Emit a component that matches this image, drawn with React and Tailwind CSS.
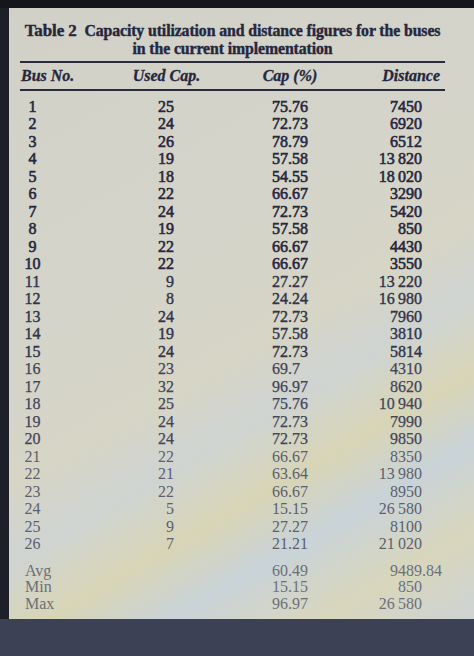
import React from "react";

const rows = [
  ["1", "25", "75", ".76", "7450"],
  ["2", "24", "72", ".73", "6920"],
  ["3", "26", "78", ".79", "6512"],
  ["4", "19", "57", ".58", "13\u2009820"],
  ["5", "18", "54", ".55", "18\u2009020"],
  ["6", "22", "66", ".67", "3290"],
  ["7", "24", "72", ".73", "5420"],
  ["8", "19", "57", ".58", "850"],
  ["9", "22", "66", ".67", "4430"],
  ["10", "22", "66", ".67", "3550"],
  ["11", "9", "27", ".27", "13\u2009220"],
  ["12", "8", "24", ".24", "16\u2009980"],
  ["13", "24", "72", ".73", "7960"],
  ["14", "19", "57", ".58", "3810"],
  ["15", "24", "72", ".73", "5814"],
  ["16", "23", "69", ".7", "4310"],
  ["17", "32", "96", ".97", "8620"],
  ["18", "25", "75", ".76", "10\u2009940"],
  ["19", "24", "72", ".73", "7990"],
  ["20", "24", "72", ".73", "9850"],
  ["21", "22", "66", ".67", "8350"],
  ["22", "21", "63", ".64", "13\u2009980"],
  ["23", "22", "66", ".67", "8950"],
  ["24", "5", "15", ".15", "26\u2009580"],
  ["25", "9", "27", ".27", "8100"],
  ["26", "7", "21", ".21", "21\u2009020"],
];

const summary = [
  ["Avg", "60", ".49", "9489", ".84"],
  ["Min", "15", ".15", "850", ""],
  ["Max", "96", ".97", "26\u2009580", ""],
];

function rowClass(i) {
  if (i < 10) return "text-[#26283f] [-webkit-text-stroke:0.6px_#26283f]";
  if (i < 15) return "text-[#323449] [-webkit-text-stroke:0.4px_#323449]";
  if (i < 20) return "text-[#42455a] [-webkit-text-stroke:0.25px_#42455a]";
  return "text-[#5c5f6e]";
}

export default function App() {
  return (
    <div className="w-[474px] h-[656px] overflow-hidden bg-[#1b1c22] flex flex-col">
      <div className="h-[8px] bg-[#15161b]" />
      <div className="flex">
        <div className="w-[9px] bg-[#1e2029]" />
        <div
          className="flex-1 h-[611px] bg-[linear-gradient(150deg,#d1d1c8_0%,#d4d4ca_40%,#d6d5c6_55%,#cfd4d2_63%,#d8d5b6_72%,#c9d3d8_80%,#d8d6bc_90%,#cdd3d4_100%)]"
          style={{ fontFamily: '"Liberation Serif", "Times New Roman", serif' }}
        >
          <div className="ml-[11px] w-[425px]">
            <div className="mt-[14px] text-center font-bold text-[15.8px] leading-[17.5px] text-[#25273d] tracking-[-0.1px] [-webkit-text-stroke:0.4px_#25273d]">
              <span className="text-[17px]">Table 2</span>&nbsp;&nbsp;Capacity utilization and distance figures for the buses
              <br />
              in the current implementation
            </div>
            <div className="mt-[4px] h-[2px] bg-[#2a2c3e]" />
            <div className="mt-[4px] flex text-[16px] leading-[18px] font-bold italic text-[#25273d] [-webkit-text-stroke:0.3px_#25273d]">
              <div className="w-[80px] pl-[1px]">Bus No.</div>
              <div className="w-[133px] text-center">Used Cap.</div>
              <div className="w-[114px] text-center">Cap (%)</div>
              <div className="w-[98px] text-right pr-[5px]">Distance</div>
            </div>
            <div className="mt-[3.5px] h-[2px] bg-[#2a2c3e]" />
            <div className="mt-[7.25px] text-[16px] leading-[17.5px]">
              {rows.map((r, i) => (
                <div key={r[0]} className={"flex whitespace-nowrap " + rowClass(i)}>
                  <div className="w-[25px] text-center">{r[0]}</div>
                  <div className="w-[129px] text-right">{r[1]}</div>
                  <div className="w-[114px] text-right">{r[2]}</div>
                  <div className="w-[40px] text-left">{r[3]}</div>
                  <div className="w-[94px] text-right">{r[4]}</div>
                </div>
              ))}
            </div>
            <div className="mt-[10px] text-[16px] leading-[16.5px] text-[#6c6f7a]">
              {summary.map((s) => (
                <div key={s[0]} className="flex whitespace-nowrap">
                  <div className="w-[25px] pl-[5px]">{s[0]}</div>
                  <div className="w-[129px]" />
                  <div className="w-[114px] text-right">{s[1]}</div>
                  <div className="w-[40px] text-left">{s[2]}</div>
                  <div className="w-[94px] text-right">{s[3]}</div>
                  <div className="w-[23px] text-left">{s[4]}</div>
                </div>
              ))}
            </div>
          </div>
        </div>
      </div>
      <div className="flex-1 bg-[#3d4155]" />
    </div>
  );
}
